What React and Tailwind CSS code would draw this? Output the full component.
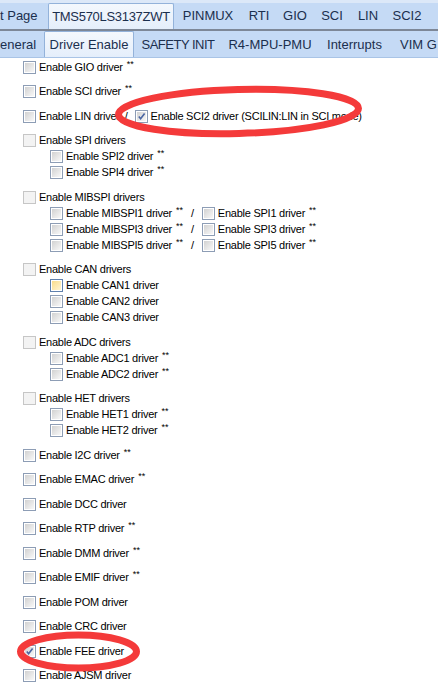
import React from "react";

const FONT = { fontFamily: '"Liberation Sans", Arial, sans-serif' };

function Box({ v = "normal" }) {
  if (v === "disabled") {
    return <span className="block w-[13px] h-[13px] shrink-0 border border-[#c6c6c6] bg-[#f3f3f3]" />;
  }
  if (v === "hover") {
    return (
      <span className="block w-[13px] h-[13px] shrink-0 border border-[#5f80ad] bg-white p-[1px]">
        <span className="block w-full h-full bg-gradient-to-br from-[#f9dc8c] to-[#fff4d2]" />
      </span>
    );
  }
  return (
    <span className="relative block w-[13px] h-[13px] shrink-0 border border-[#8d9db5] bg-white p-[1px]">
      <span className="block w-full h-full bg-gradient-to-br from-[#d2d2d2] to-[#f8f8f8]" />
      {v === "checked" && (
        <svg className="absolute left-0 top-0" width="11" height="11" viewBox="0 0 11 11">
          <path d="M2.8 5.6 L4.6 7.8 L8.6 2.4" fill="none" stroke="#4a66a3" strokeWidth="1.6" />
        </svg>
      )}
    </span>
  );
}

function Stars() {
  return <span className="ml-[4px] text-[9px] align-top relative top-[-1px] tracking-normal">**</span>;
}

function Item({ label, v, star, children }) {
  return (
    <div className="flex items-center h-[16px] gap-[3px] whitespace-nowrap">
      <Box v={v} />
      <span>
        {label}
        {star && <Stars />}
      </span>
      {children}
    </div>
  );
}

function Top({ children, first }) {
  return <div className={first ? "pl-[23px]" : "pl-[23px] mt-[8.5px]"}>{children}</div>;
}

function Subs({ children }) {
  return <div className="pl-[27px]">{children}</div>;
}

function Tab({ w, active, children, left }) {
  if (active) {
    return (
      <div
        className={`${w} shrink-0 self-end h-[27px] -mb-[1px] flex items-center justify-center bg-gradient-to-b from-[#f4f8fd] to-[#e4eefb] border border-b-0 border-[#93b2da] rounded-t-[2px] text-[#1b2f4e] relative z-10 whitespace-nowrap`}
      >
        {children}
      </div>
    );
  }
  return (
    <div
      className={`${w} shrink-0 h-full flex items-center ${left ? "justify-start" : "justify-center"} text-[#1b2f4e] whitespace-nowrap`}
    >
      {children}
    </div>
  );
}

function Slash({ children, wide }) {
  return (
    <>
      <span className={wide ? "ml-[5px] mr-[5px]" : "ml-[2px] mr-[4px]"}>/</span>
      {children}
    </>
  );
}

export default function App() {
  return (
    <div className="w-[438px] h-[687px] overflow-hidden bg-white relative" style={FONT}>
      {/* tab bar 1 */}
      <div className="h-[31px] bg-[#c5daf5] border-t-[3px] border-[#dce8f8] border-b-2 border-b-[#7d8797] flex items-end text-[13px] overflow-hidden">
        <div className="flex h-[27px] items-stretch w-full">
          <Tab w="w-[48px]" left>t Page</Tab>
          <Tab w="w-[126px]" active>
            <span className="tracking-[-0.3px]">TMS570LS3137ZWT</span>
          </Tab>
          <Tab w="w-[68px]">PINMUX</Tab>
          <Tab w="w-[34px]">RTI</Tab>
          <Tab w="w-[38px]">GIO</Tab>
          <Tab w="w-[36px]">SCI</Tab>
          <Tab w="w-[36px]">LIN</Tab>
          <Tab w="w-[42px]">SCI2</Tab>
        </div>
      </div>
      {/* tab bar 2 */}
      <div className="h-[27px] bg-[#c5daf5] border-b border-[#a9c4e6] flex items-end text-[13px] overflow-hidden">
        <div className="flex h-[25px] items-stretch w-full">
          <Tab w="w-[44px]" left>eneral</Tab>
          <Tab w="w-[90px]" active>Driver Enable</Tab>
          <Tab w="w-[88px]">
            <span className="tracking-[-0.5px]">SAFETY INIT</span>
          </Tab>
          <Tab w="w-[96px]">R4-MPU-PMU</Tab>
          <Tab w="w-[73px]">Interrupts</Tab>
          <div className="shrink-0 h-full flex items-center pl-[9px] whitespace-nowrap text-[#1b2f4e]">VIM G</div>
        </div>
      </div>

      {/* content */}
      <div className="pt-[1px] text-[11px] tracking-[-0.25px] text-black">
        <Top first><Item label="Enable GIO driver" star /></Top>
        <Top><Item label="Enable SCI driver" star /></Top>
        <Top>
          <Item label="Enable LIN driver">
            <Slash>
              <Box v="checked" />
              <span>Enable SCI2 driver (SCILIN:LIN in SCI mode)</span>
            </Slash>
          </Item>
        </Top>
        <Top>
          <Item label="Enable SPI drivers" v="disabled" />
          <Subs>
            <Item label="Enable SPI2 driver" star />
            <Item label="Enable SPI4 driver" star />
          </Subs>
        </Top>
        <Top>
          <Item label="Enable MIBSPI drivers" v="disabled" />
          <Subs>
            {["1", "3", "5"].map((n) => (
              <Item key={n} label={`Enable MIBSPI${n} driver`} star>
                <Slash wide>
                  <Box />
                  <span>
                    Enable SPI{n} driver
                    <Stars />
                  </span>
                </Slash>
              </Item>
            ))}
          </Subs>
        </Top>
        <Top>
          <Item label="Enable CAN drivers" v="disabled" />
          <Subs>
            <Item label="Enable CAN1 driver" v="hover" />
            <Item label="Enable CAN2 driver" />
            <Item label="Enable CAN3 driver" />
          </Subs>
        </Top>
        <Top>
          <Item label="Enable ADC drivers" v="disabled" />
          <Subs>
            <Item label="Enable ADC1 driver" star />
            <Item label="Enable ADC2 driver" star />
          </Subs>
        </Top>
        <Top>
          <Item label="Enable HET drivers" v="disabled" />
          <Subs>
            <Item label="Enable HET1 driver" star />
            <Item label="Enable HET2 driver" star />
          </Subs>
        </Top>
        <Top><Item label="Enable I2C driver" star /></Top>
        <Top><Item label="Enable EMAC driver" star /></Top>
        <Top><Item label="Enable DCC driver" /></Top>
        <Top><Item label="Enable RTP driver" star /></Top>
        <Top><Item label="Enable DMM driver" star /></Top>
        <Top><Item label="Enable EMIF driver" star /></Top>
        <Top><Item label="Enable POM driver" /></Top>
        <Top><Item label="Enable CRC driver" /></Top>
        <Top><Item label="Enable FEE driver" v="checked" /></Top>
        <Top><Item label="Enable AJSM driver" /></Top>
      </div>

      {/* red annotation ellipses */}
      <svg className="absolute left-0 top-0 pointer-events-none" width="438" height="687">
        <ellipse cx="238.5" cy="111.5" rx="120" ry="22" fill="none" stroke="#f43a3a" strokeWidth="7" transform="rotate(-1.5 238.5 111.5)" />
        <ellipse cx="78.5" cy="651.5" rx="58" ry="16.5" fill="none" stroke="#f43a3a" strokeWidth="7" />
      </svg>
    </div>
  );
}
